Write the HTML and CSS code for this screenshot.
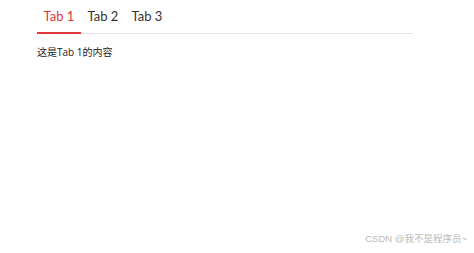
FILE: index.html
```html
<!DOCTYPE html>
<html lang="zh-CN">
<head>
<meta charset="utf-8">
<title>Tabs</title>
<link rel="stylesheet" href="styles.css">
</head>
<body>
<div class="tabs-wrap">
  <div class="tabs">
    <div class="tab active">Tab 1</div>
    <div class="tab">Tab 2</div>
    <div class="tab">Tab 3</div>
  </div>
  <div class="panel">这是Tab 1的内容</div>
</div>
<div class="watermark">CSDN @我不是程序员~</div>
</body>
</html>
```
FILE: styles.css
```css
html, body {
  margin: 0;
  padding: 0;
  background: #ffffff;
}
body {
  font-family: "Open Sans", "Noto Sans CJK SC", sans-serif;
  color: #333333;
  width: 474px;
  height: 253px;
  position: relative;
  overflow: hidden;
}
.tabs-wrap {
  margin-left: 37px;
  width: 376px;
}
.tabs {
  display: flex;
  border-bottom: 1px solid #e6e6e6;
}
.tab {
  padding: 8px 6.6px 7px;
  font-family: "Lato", "Noto Sans CJK SC", sans-serif;
  font-size: 13px;
  line-height: 17px;
  color: #333333;
  border-bottom: 2px solid transparent;
  margin-bottom: -1px;
}
.tab.active {
  color: #e0383e;
  border-bottom-color: #e0383e;
}
.panel {
  margin-top: 11px;
  font-size: 10px;
  line-height: 14px;
  color: #222222;
}
.watermark {
  position: absolute;
  right: 7px;
  bottom: 8px;
  font-family: "Liberation Sans", "Noto Sans CJK SC", sans-serif;
  font-size: 9.5px;
  color: #bbbbbb;
}
```
